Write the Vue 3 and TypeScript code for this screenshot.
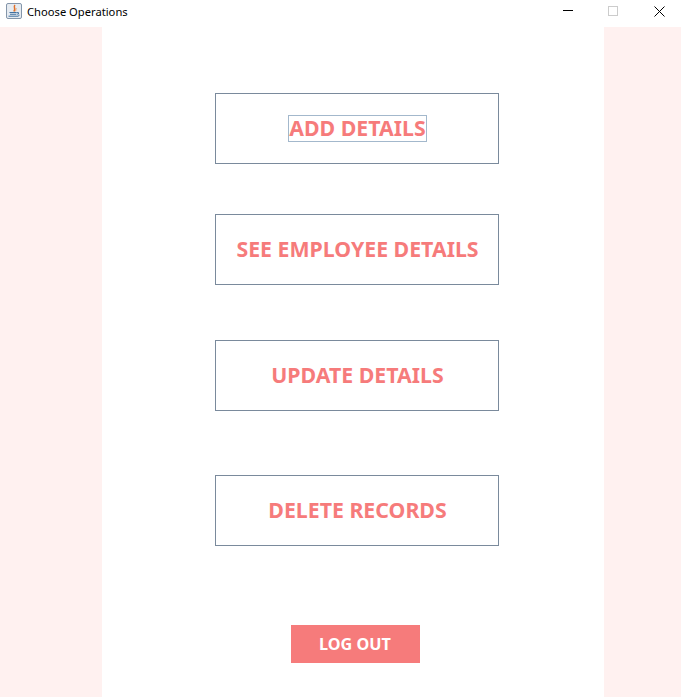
<script setup lang="ts">
interface Op { label: string; focused?: boolean; cls: string }
const ops: Op[] = [
  { label: 'ADD DETAILS', focused: true, cls: 'op-a' },
  { label: 'SEE EMPLOYEE DETAILS', cls: 'op-b' },
  { label: 'UPDATE DETAILS', cls: 'op-c' },
  { label: 'DELETE RECORDS', cls: 'op-d' },
]
</script>

<template>
  <div class="window">
    <header class="titlebar">
      <div class="title-left">
        <svg class="java" width="16" height="16" viewBox="0 0 16 16">
          <rect x="0.5" y="0.5" width="15" height="15" rx="1.5" fill="#e6ebf1" stroke="#8496aa" />
          <path d="M9 2C6.8 4.2 10.4 5.4 7.8 8.4" fill="none" stroke="#e2702a" stroke-width="1.5" />
          <path d="M10.5 5C9.2 6 10.5 7 9.3 8.3" fill="none" stroke="#eb9a5c" stroke-width="1" />
          <path d="M3.5 9.5h7M4 11.2h6" stroke="#41709f" stroke-width="1.1" />
          <path d="M10.5 9.5h2v1.6h-2" fill="none" stroke="#41709f" stroke-width="0.9" />
          <path d="M2.5 13.2h9.5l1.5-1" fill="none" stroke="#41709f" stroke-width="1" />
        </svg>
        <span class="title">Choose Operations</span>
      </div>
      <div class="controls">
        <svg class="ctl ctl-min" width="10" height="1" viewBox="0 0 10 1"><path d="M0 0.5h10" stroke="#000" /></svg>
        <svg class="ctl ctl-max" width="10" height="10" viewBox="0 0 10 10"><rect x="0.5" y="0.5" width="9" height="9" fill="none" stroke="#ccc" /></svg>
        <svg class="ctl ctl-close" width="11" height="11" viewBox="0 0 11 11"><path d="M0.5 0.5l10 10M10.5 0.5l-10 10" stroke="#000" /></svg>
      </div>
    </header>
    <main class="body">
      <div class="panel">
        <button v-for="op in ops" :key="op.label" class="op" :class="op.cls">
          <span class="label" :class="{ focused: op.focused }">{{ op.label }}</span>
        </button>
        <button class="logout">LOG OUT</button>
      </div>
    </main>
  </div>
</template>

<style>
html, body { margin: 0; background: #fff; }
</style>

<style scoped>
.window { width: 681px; height: 697px; display: flex; flex-direction: column; overflow: hidden; background: #fff; }
.titlebar { height: 27px; flex: none; display: flex; align-items: flex-start; justify-content: space-between; background: #fff; }
.title-left { display: flex; align-items: center; padding: 3px 0 0 6px; }
.java { display: block; }
.title { margin-left: 5px; font: 11.2px "Noto Sans", "Open Sans", sans-serif; color: #000; }
.controls { display: flex; align-items: flex-start; }
.ctl { display: block; }
.ctl-min { margin: 10px 35px 0 0; }
.ctl-max { margin: 6px 36px 0 0; }
.ctl-close { margin: 6px 16px 0 0; }
.body { flex: 1; background: #fff1f0; padding: 0 77px 0 102px; display: flex; min-height: 0; }
.panel { flex: 1; background: #fff; display: flex; flex-direction: column; align-items: flex-start; padding: 66px 0 0 113px; }
.op { width: 284px; height: 71px; flex: none; box-sizing: border-box; border: 1px solid #7a8a9c; background: #fff; padding: 0 0 0 1px; display: flex; align-items: center; justify-content: center; font: 700 21.3px "Noto Sans", "Open Sans", sans-serif; color: #f67b7b; }
.op-b { margin-top: 50px; }
.op-c { margin-top: 55px; }
.op-d { margin-top: 64px; }
.label { display: block; padding: 0 0 2px; line-height: 23px; border: 1px solid transparent; }
.label.focused { border-color: #a3b8cc; }
.logout { margin: 79px 0 0 76px; width: 129px; height: 38px; flex: none; border: 0; padding: 0 1px 0 0; background: #f67b7b; color: #fff; font: 700 16.2px "Noto Sans", "Open Sans", sans-serif; }
</style>
